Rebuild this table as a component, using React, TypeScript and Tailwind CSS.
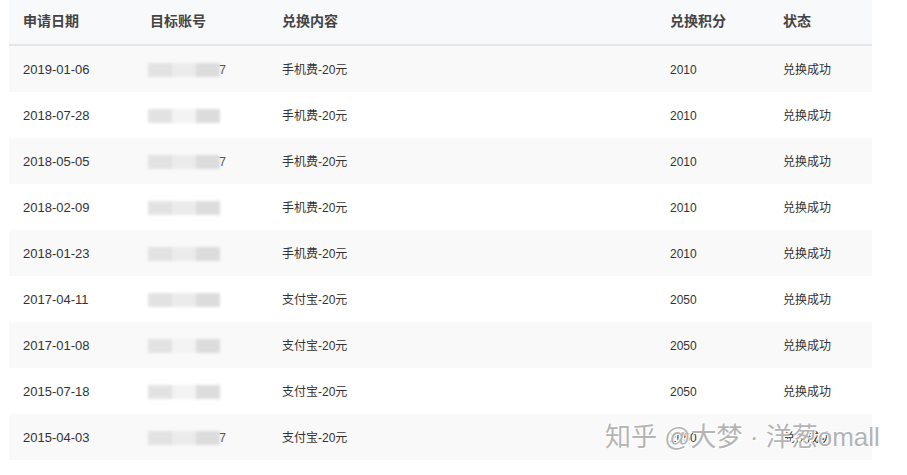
import React from 'react';

interface Record {
  date: string;
  content: string;
  points: string;
  status: string;
  mask: number;
}

const records: Record[] = [
  { date: '2019-01-06', content: '手机费-20元', points: '2010', status: '兑换成功', mask: 0 },
  { date: '2018-07-28', content: '手机费-20元', points: '2010', status: '兑换成功', mask: 1 },
  { date: '2018-05-05', content: '手机费-20元', points: '2010', status: '兑换成功', mask: 2 },
  { date: '2018-02-09', content: '手机费-20元', points: '2010', status: '兑换成功', mask: 3 },
  { date: '2018-01-23', content: '手机费-20元', points: '2010', status: '兑换成功', mask: 3 },
  { date: '2017-04-11', content: '支付宝-20元', points: '2050', status: '兑换成功', mask: 3 },
  { date: '2017-01-08', content: '支付宝-20元', points: '2050', status: '兑换成功', mask: 1 },
  { date: '2015-07-18', content: '支付宝-20元', points: '2050', status: '兑换成功', mask: 1 },
  { date: '2015-04-03', content: '支付宝-20元', points: '2050', status: '兑换成功', mask: 2 },
];

// blurred-out account number
function MaskedAccount({ variant }: { variant: number }) {
  return (
    <div className="relative flex h-[18px] w-[80px] items-center">
      <div className="flex h-[14px] w-[72px] blur-[1.5px]">
        <div className="h-full w-[24px] bg-[#e2e2e2]" />
        <div className={`h-full w-[24px] ${variant === 1 ? 'bg-[#f3f3f3]' : 'bg-[#ebebeb]'}`} />
        <div className="h-full w-[24px] bg-[#dcdcdc]" />
      </div>
      {variant === 0 || variant === 2 ? (
        <span className="absolute right-[2px] top-0 text-[12px] leading-[18px] text-[#555]">7</span>
      ) : null}
    </div>
  );
}

export default function App() {
  return (
    <div
      className="relative h-[475px] w-[907px] overflow-hidden bg-white"
      style={{ fontFamily: '"Liberation Sans", "Noto Sans CJK SC", sans-serif' }}
    >
      <div className="ml-[9px] w-[863px]">
        <div className="flex h-[46px] items-center border-b-2 border-[#e6e6e8] bg-[#f8f9fa] pb-[2px] text-[14px] font-bold text-[#444]">
          <div className="w-[127px] pl-[14px]">申请日期</div>
          <div className="w-[132px] pl-[14px]">目标账号</div>
          <div className="w-[388px] pl-[14px]">兑换内容</div>
          <div className="w-[113px] pl-[14px]">兑换积分</div>
          <div className="flex-1 pl-[14px]">状态</div>
        </div>
        {records.map((r, i) => (
          <div
            key={i}
            className={`flex h-[46px] items-center pt-[1px] text-[12px] text-[#333] ${i % 2 === 0 ? 'bg-[#f9f9f9]' : 'bg-white'}`}
          >
            <div className="w-[127px] pl-[14px] text-[13px]">{r.date}</div>
            <div className="w-[132px] pl-[12px]">
              <MaskedAccount variant={r.mask} />
            </div>
            <div className="w-[388px] pl-[14px]">{r.content}</div>
            <div className="w-[113px] pl-[14px]">{r.points}</div>
            <div className="flex-1 pl-[14px]">{r.status}</div>
          </div>
        ))}
      </div>

      <div
        className="absolute left-[605px] top-[421px] whitespace-nowrap text-[26px] leading-[32px] text-[#b4b4b4]"
        style={{ textShadow: '1px 1px 0 #fff, -1px -1px 0 #fff' }}
      >
        知乎 @大梦 · 洋葱omall
      </div>
    </div>
  );
}
